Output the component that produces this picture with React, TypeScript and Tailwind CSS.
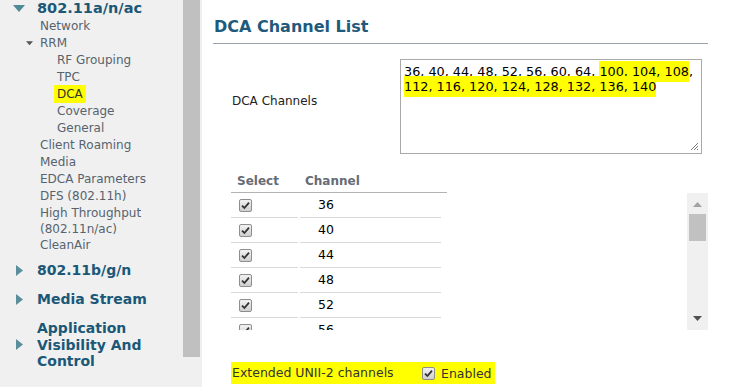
import React from 'react';

const font = { fontFamily: '"DejaVu Sans", Verdana, sans-serif' };

const Check = () => (
  <span className="inline-flex h-[13px] w-[13px] items-center justify-center rounded-[2px] border border-[#8e8e8e] bg-gradient-to-b from-[#f2f2f2] to-[#cfcfcf]">
    <svg width="9" height="9" viewBox="0 0 9 9">
      <path d="M1 4.6 L3.4 7 L8 1.6" fill="none" stroke="#333" strokeWidth="1.8" />
    </svg>
  </span>
);

const DownTri = ({ size, color }: { size: number; color: string }) => (
  <svg width={size} height={size / 2 + 1} viewBox="0 0 12 7">
    <path d="M0 0 H12 L6 7 Z" fill={color} />
  </svg>
);

const RightTri = () => (
  <svg width="7" height="11" viewBox="0 0 7 11">
    <path d="M0 0 L7 5.5 L0 11 Z" fill="#5b8e9b" />
  </svg>
);

const Item = ({ label, indent, hl }: { label: string; indent: string; hl?: boolean }) => (
  <div className={`h-[17px] leading-[17px] ${indent}`}>
    <span className={hl ? 'bg-[#ffff00] px-[3px] py-[2px] -ml-[3px] text-[#333]' : ''}>{label}</span>
  </div>
);

const channels = ['36', '40', '44', '48', '52', '56'];

export default function App() {
  return (
    <div className="flex h-[387px] w-[749px] overflow-hidden bg-white" style={font}>
      {/* sidebar */}
      <div className="flex w-[202px] shrink-0 bg-[#f0f0f0]">
        <div className="w-[183px] text-[12px] text-[#57636e]">
          <div className="flex h-[18px] items-center pb-px">
            <span className="ml-[13px] mr-[12px] flex">
              <DownTri size={12} color="#4f8a98" />
            </span>
            <span className="text-[14.5px] font-bold leading-[17px] text-[#1b5878]">802.11a/n/ac</span>
          </div>
          <Item label="Network" indent="pl-[40px]" />
          <div className="flex h-[17px] items-center leading-[17px]">
            <span className="ml-[26px] mr-[7px] flex">
              <DownTri size={7} color="#555" />
            </span>
            RRM
          </div>
          <Item label="RF Grouping" indent="pl-[57px]" />
          <Item label="TPC" indent="pl-[57px]" />
          <Item label="DCA" indent="pl-[57px]" hl />
          <Item label="Coverage" indent="pl-[57px]" />
          <Item label="General" indent="pl-[57px]" />
          <Item label="Client Roaming" indent="pl-[40px]" />
          <Item label="Media" indent="pl-[40px]" />
          <Item label="EDCA Parameters" indent="pl-[40px]" />
          <Item label="DFS (802.11h)" indent="pl-[40px]" />
          <div className="pl-[40px] leading-[16px]">
            High Throughput
            <br />
            (802.11n/ac)
          </div>
          <div className="pl-[40px] leading-[16px]">CleanAir</div>

          <div className="mt-[9px] flex h-[17px] items-center">
            <span className="ml-[16px] mr-[14px] flex">
              <RightTri />
            </span>
            <span className="text-[14px] font-bold text-[#1b5878]">802.11b/g/n</span>
          </div>
          <div className="mt-[12px] flex h-[17px] items-center">
            <span className="ml-[16px] mr-[14px] flex">
              <RightTri />
            </span>
            <span className="text-[14px] font-bold text-[#1b5878]">Media Stream</span>
          </div>
          <div className="mt-[12px] flex items-center">
            <span className="ml-[16px] mr-[14px] flex">
              <RightTri />
            </span>
            <span className="text-[14px] font-bold leading-[16.5px] text-[#1b5878]">
              Application
              <br />
              Visibility And
              <br />
              Control
            </span>
          </div>
        </div>
        <div className="h-[357px] w-[17px] bg-[#c0c0c0]" />
      </div>

      {/* main */}
      <div className="flex-1 pl-[11px] text-[12px] text-[#222]">
        <div className="pt-[19px] pl-px text-[16px] font-bold leading-[16px] text-[#1d5a7c]">DCA Channel List</div>
        <div className="mt-[8px] h-px w-[495px] bg-[#9aa3ad]" />

        <div className="mt-[15px] flex">
          <div className="w-[187px] pl-[19px] pt-[34px] leading-[16px]">DCA Channels</div>
          <div className="relative h-[95px] w-[302px] border border-[#a9a9a9] pl-[3px] pt-[4px] text-[12.8px] leading-[15px] whitespace-nowrap text-black">
            36, 40, 44, 48, 52, 56, 60, 64,{' '}
            <span className="bg-[#ffff00] py-[3px]">100, 104, 108</span>,
            <br />
            <span className="bg-[#ffff00] py-[3px]">112, 116, 120, 124, 128, 132, 136, 140</span>
            <svg className="absolute bottom-[2px] right-[2px]" width="9" height="9" viewBox="0 0 9 9">
              <path d="M8 1 L1 8 M8 4 L4 8 M8 7 L7 8" stroke="#777" strokeWidth="1" />
            </svg>
          </div>
        </div>

        <div className="ml-[18px] mt-[15px]">
          <div className="flex h-[24px] w-[216px] items-center border-b border-[#b3b3b3] font-bold text-[#666c75]">
            <span className="w-[74px] pl-[6px]">Select</span>
            <span>Channel</span>
          </div>
          <div className="flex h-[137px] w-[477px] overflow-hidden">
            <div className="w-[210px]">
              {channels.map((c) => (
                <div key={c} className="flex h-[25px]">
                  <div className="flex w-[67px] items-center border-b border-[#d9d9d9] pl-[8px]">
                    <Check />
                  </div>
                  <div className="ml-[2px] flex w-[141px] items-center border-b border-[#d9d9d9] pl-[18px] text-[12.5px] text-black">
                    {c}
                  </div>
                </div>
              ))}
            </div>
            <div className="flex-1" />
            <div className="flex w-[21px] flex-col items-center bg-[#f0f0f0] pt-[1px]">
              <svg className="mt-[8px]" width="9" height="5" viewBox="0 0 9 5">
                <path d="M0 5 L4.5 0 L9 5 Z" fill="#a3a3a3" />
              </svg>
              <div className="mt-[7px] h-[27px] w-[17px] bg-[#c1c1c1]" />
              <div className="flex-1" />
              <svg className="mb-[9px]" width="9" height="5" viewBox="0 0 9 5">
                <path d="M0 0 H9 L4.5 5 Z" fill="#505050" />
              </svg>
            </div>
          </div>

          <div className="mt-[32px] flex h-[22px] w-[264px] items-center bg-[#ffff00] pl-px text-[12.5px] text-[#333]">
            <span className="w-[190px]">Extended UNII-2 channels</span>
            <Check />
            <span className="ml-[6px] mt-[2px]">Enabled</span>
          </div>
        </div>
      </div>
    </div>
  );
}
